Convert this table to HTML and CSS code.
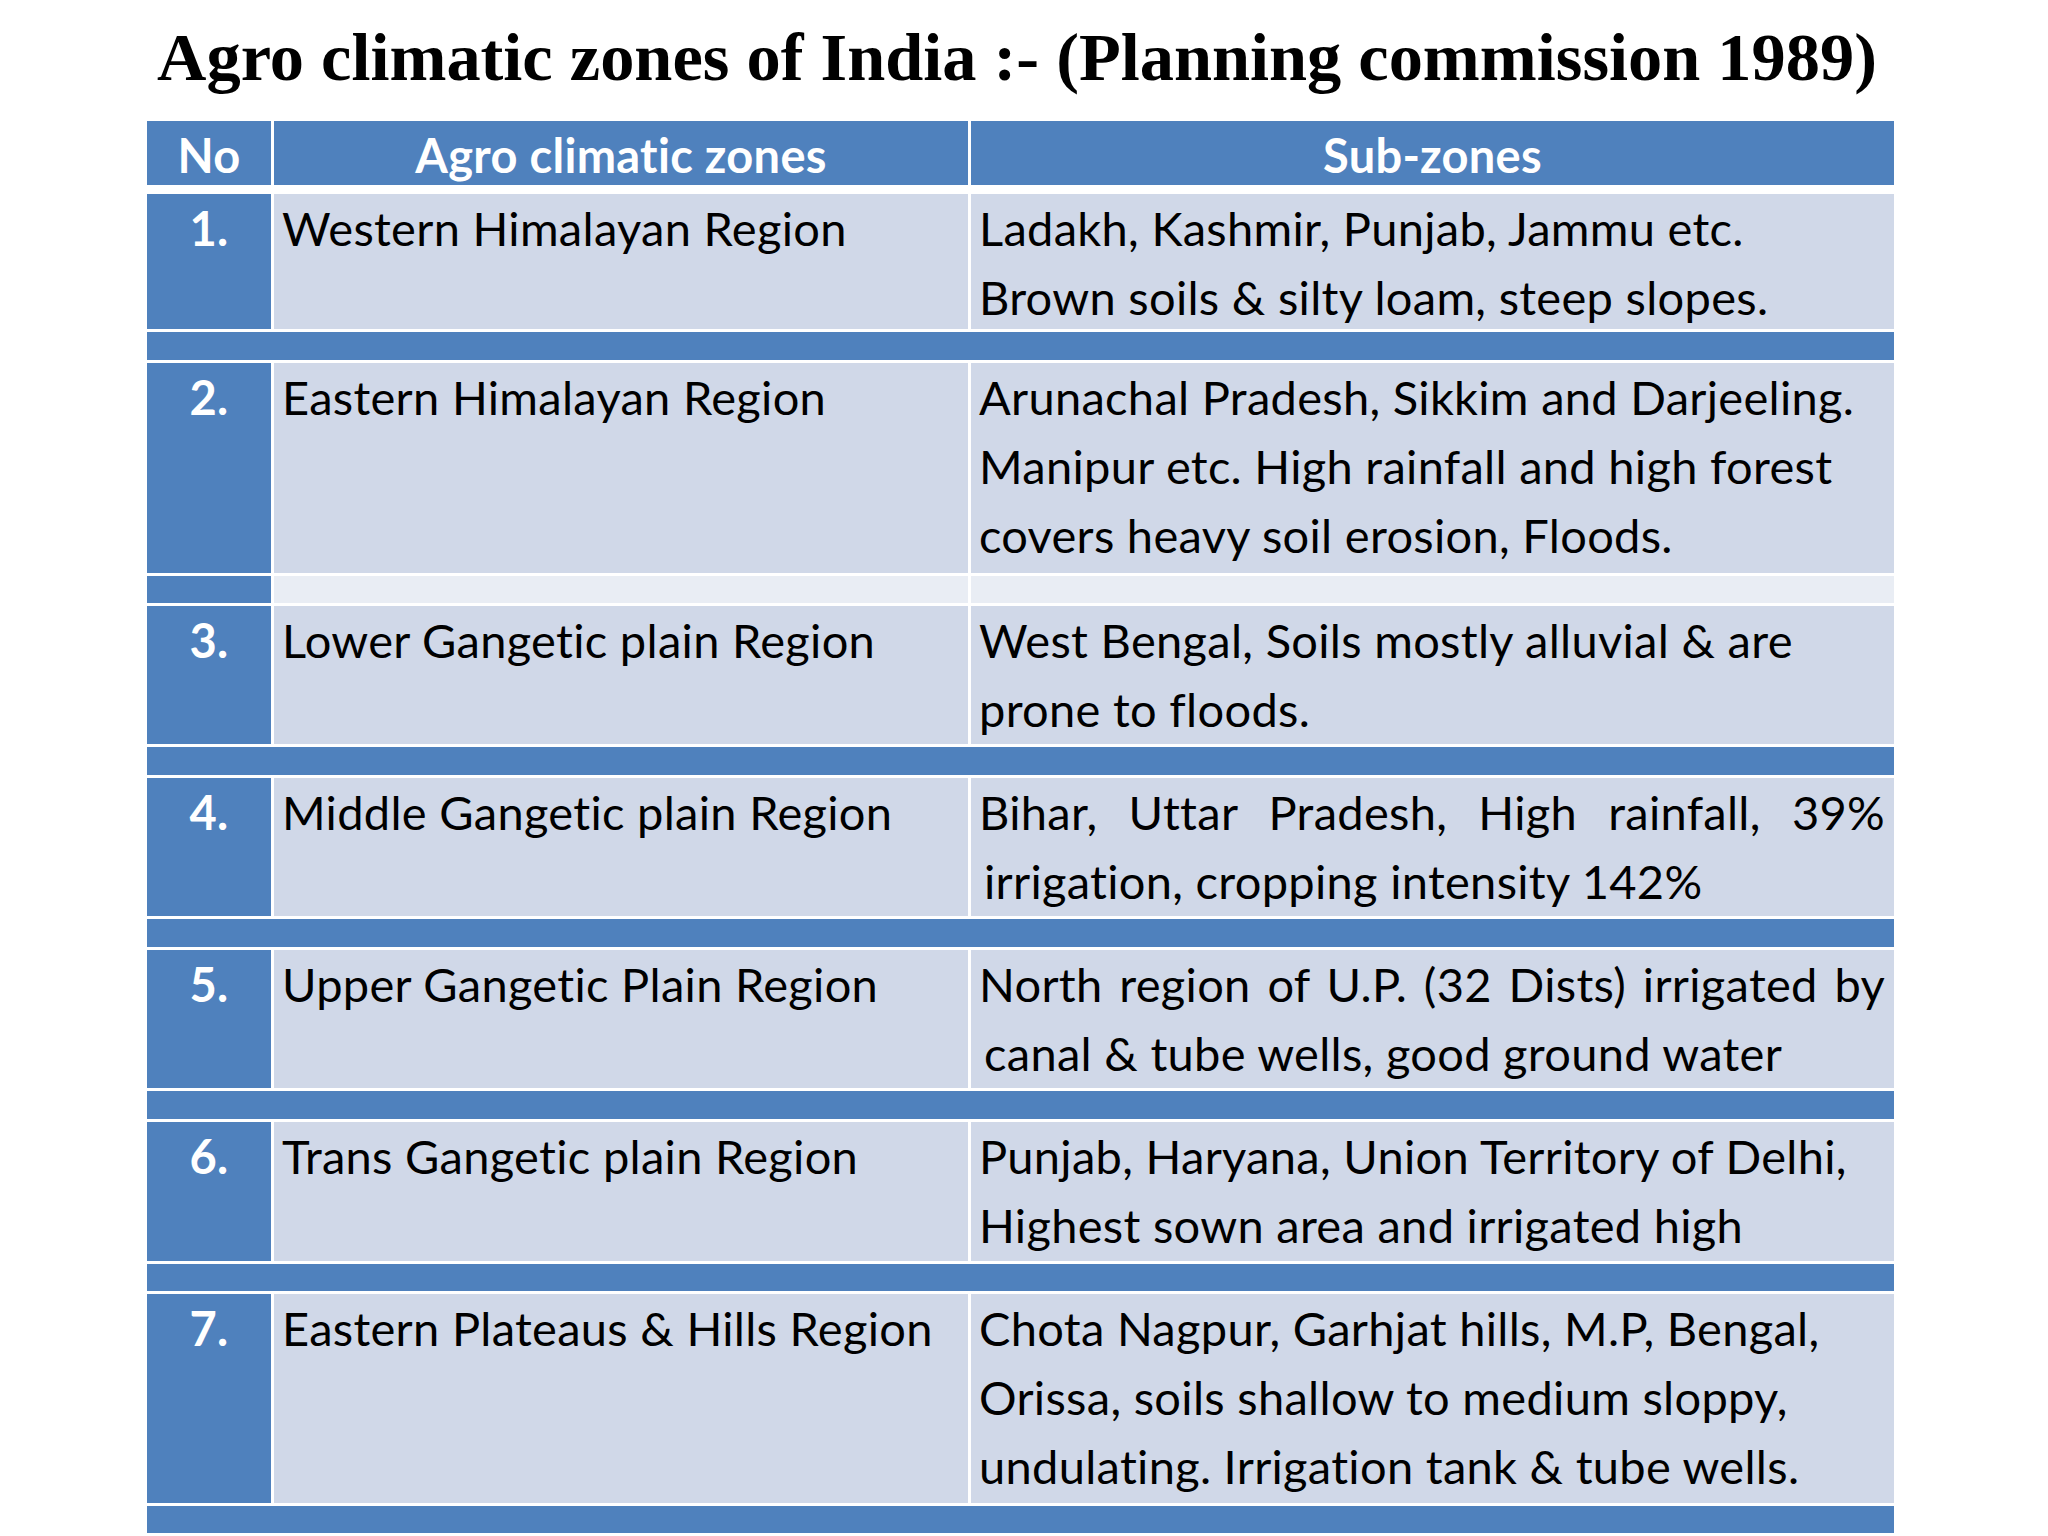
FILE: index.html
```html
<!DOCTYPE html>
<html lang="en">
<head>
<meta charset="utf-8">
<title>Agro climatic zones of India</title>
<link rel="stylesheet" href="styles.css">
</head>
<body>
<div class="page">
  <h1 class="title">Agro climatic zones of India :- (Planning commission 1989)</h1>
  <div class="table">
    <div class="row head">
      <div class="cell">No</div>
      <div class="cell">Agro climatic zones</div>
      <div class="cell">Sub-zones</div>
    </div>

    <div class="row r1">
      <div class="cell num">1.</div>
      <div class="cell zone">Western Himalayan Region</div>
      <div class="cell sub">
        <div class="ln">Ladakh, Kashmir, Punjab, Jammu etc.</div>
        <div class="ln">Brown soils &amp; silty loam, steep slopes.</div>
      </div>
    </div>
    <div class="bar"></div>

    <div class="row r2">
      <div class="cell num">2.</div>
      <div class="cell zone">Eastern Himalayan Region</div>
      <div class="cell sub">
        <div class="ln">Arunachal Pradesh, Sikkim and Darjeeling.</div>
        <div class="ln">Manipur etc. High rainfall and high forest</div>
        <div class="ln">covers heavy soil erosion, Floods.</div>
      </div>
    </div>
    <div class="row light">
      <div class="cell num"></div>
      <div class="cell pale"></div>
      <div class="cell pale"></div>
    </div>

    <div class="row r3">
      <div class="cell num">3.</div>
      <div class="cell zone">Lower Gangetic plain Region</div>
      <div class="cell sub">
        <div class="ln">West Bengal, Soils mostly alluvial &amp; are</div>
        <div class="ln">prone to floods.</div>
      </div>
    </div>
    <div class="bar"></div>

    <div class="row r4">
      <div class="cell num">4.</div>
      <div class="cell zone">Middle Gangetic plain Region</div>
      <div class="cell sub">
        <div class="ln just">Bihar, Uttar Pradesh, High rainfall, 39%</div>
        <div class="ln indent">irrigation, cropping intensity 142%</div>
      </div>
    </div>
    <div class="bar"></div>

    <div class="row r5">
      <div class="cell num">5.</div>
      <div class="cell zone">Upper Gangetic Plain Region</div>
      <div class="cell sub">
        <div class="ln just">North region of U.P. (32 Dists) irrigated by</div>
        <div class="ln indent">canal &amp; tube wells, good ground water</div>
      </div>
    </div>
    <div class="bar"></div>

    <div class="row r6">
      <div class="cell num">6.</div>
      <div class="cell zone">Trans Gangetic plain Region</div>
      <div class="cell sub">
        <div class="ln">Punjab, Haryana, Union Territory of Delhi,</div>
        <div class="ln">Highest sown area and irrigated high</div>
      </div>
    </div>
    <div class="bar thin"></div>

    <div class="row r7">
      <div class="cell num">7.</div>
      <div class="cell zone">Eastern Plateaus &amp; Hills Region</div>
      <div class="cell sub">
        <div class="ln">Chota Nagpur, Garhjat hills, M.P, Bengal,</div>
        <div class="ln">Orissa, soils shallow to medium sloppy,</div>
        <div class="ln">undulating. Irrigation tank &amp; tube wells.</div>
      </div>
    </div>
    <div class="bar thin"></div>
  </div>
</div>
</body>
</html>
```

FILE: styles.css
```css
html, body {
  margin: 0;
  padding: 0;
  background: #ffffff;
}

.page {
  width: 2048px;
  height: 1536px;
  overflow: hidden;
}

.title {
  margin: 0;
  box-sizing: border-box;
  height: 121px;
  padding: 23px 14px 0 0;
  font-family: "Liberation Serif", "Times New Roman", serif;
  font-weight: bold;
  font-size: 68.4px;
  line-height: 68px;
  color: #000000;
  text-align: center;
  white-space: nowrap;
}

.table {
  margin-left: 147px;
  width: 1747px;
  display: flex;
  flex-direction: column;
  gap: 3px;
  font-family: Lato, "Open Sans", sans-serif;
  font-size: 47px;
  letter-spacing: 0.3px;
  line-height: 69px;
  color: #000000;
}

.row {
  display: grid;
  grid-template-columns: 124px 694px 923px;
  grid-template-rows: minmax(0, 1fr);
  column-gap: 3px;
}

.cell {
  box-sizing: border-box;
  min-height: 0;
  background: #d0d8e8;
  white-space: nowrap;
}

.head {
  height: 64px;
  margin-bottom: 6px;
}

.head .cell {
  background: #4f81bd;
  color: #ffffff;
  font-weight: bold;
  text-align: center;
  line-height: 64px;
  padding-top: 2px;
}

.num {
  background: #4f81bd;
  color: #ffffff;
  font-weight: bold;
  text-align: center;
}

.zone {
  padding-left: 8px;
}

.sub {
  padding: 0 9px 0 8px;
}

.ln.just {
  white-space: normal;
  text-align: justify;
  text-align-last: justify;
}

.ln.indent {
  padding-left: 5px;
}

.pale {
  background: #e9edf4;
}

.bar {
  height: 28px;
  background: #4f81bd;
}

.bar.thin {
  height: 27px;
}

.r1 { height: 135px; }
.r2 { height: 210px; }
.light { height: 27px; }
.r3 { height: 138px; }
.r4 { height: 138px; }
.r5 { height: 138px; }
.r6 { height: 139px; }
.r7 { height: 209px; }
```
